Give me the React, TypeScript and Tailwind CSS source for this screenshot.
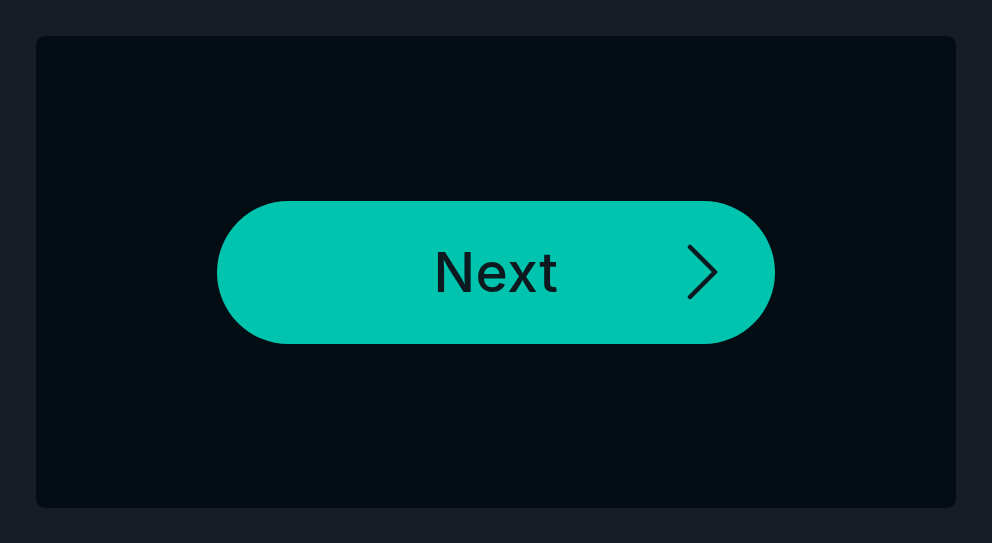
export default function App() {
  return (
    <div className="w-[992px] h-[543px] bg-[#161d26] p-[36px] pb-[35px]">
      <div className="w-full h-full rounded-[9px] bg-[#050d14] flex items-center justify-center">
        <button className="relative w-[558px] h-[143px] rounded-full bg-[#00c4ae] flex items-center justify-center">
          <span
            className="text-[55px] font-medium leading-none text-[#0c1a1f] tracking-[0.5px]"
            style={{ fontFamily: 'Inter, "Noto Sans", sans-serif' }}
          >
            Next
          </span>
          {/* chevron */}
          <svg
            className="absolute right-[55px] top-[43px]"
            width="36"
            height="56"
            viewBox="0 0 36 56"
            fill="none"
          >
            <path
              d="M6 3 L31 28 L6 53"
              stroke="#0c1a1f"
              strokeWidth="4.5"
              strokeLinecap="round"
              strokeLinejoin="round"
            />
          </svg>
        </button>
      </div>
    </div>
  )
}
